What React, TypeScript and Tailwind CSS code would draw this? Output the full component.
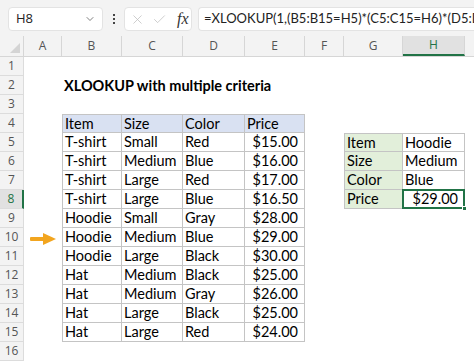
import { ChevronDown, X, Check } from 'lucide-react';

type Col = { key: string; w: string };

const cols: Col[] = [
    { key: 'A', w: 'w-[38px]' },
    { key: 'B', w: 'w-[60px]' },
    { key: 'C', w: 'w-[61px]' },
    { key: 'D', w: 'w-[62px]' },
    { key: 'E', w: 'w-[60px]' },
    { key: 'F', w: 'w-[39px]' },
    { key: 'G', w: 'w-[59px]' },
    { key: 'H', w: 'w-[62px]' },
    { key: 'I', w: 'w-[40px]' },
];

const products: string[][] = [
    ['T-shirt', 'Small', 'Red', '$15.00'],
    ['T-shirt', 'Medium', 'Blue', '$16.00'],
    ['T-shirt', 'Large', 'Red', '$17.00'],
    ['T-shirt', 'Large', 'Blue', '$16.50'],
    ['Hoodie', 'Small', 'Gray', '$28.00'],
    ['Hoodie', 'Medium', 'Blue', '$29.00'],
    ['Hoodie', 'Large', 'Black', '$30.00'],
    ['Hat', 'Medium', 'Black', '$25.00'],
    ['Hat', 'Medium', 'Gray', '$26.00'],
    ['Hat', 'Large', 'Black', '$25.00'],
    ['Hat', 'Large', 'Red', '$24.00'],
];

const lookup: string[][] = [
    ['Item', 'Hoodie'],
    ['Size', 'Medium'],
    ['Color', 'Blue'],
    ['Price', '$29.00'],
];

const border = 'border-[#c4c4c4]';

function Arrow() {
    return (
        <svg width="26" height="12" viewBox="0 0 26 12">
            <rect x="0" y="4" width="15" height="4" rx="1" fill="#f2a51f" />
            <path d="M13 0 L26 6 L13 12 Z" fill="#f2a51f" />
        </svg>
    );
}

function Cell({ row, col }: { row: number; col: string }) {
    const def = cols.find((c) => c.key === col)!;
    const colIdx = 'BCDE'.indexOf(col);
    const inTable = row >= 4 && row <= 15 && colIdx >= 0;
    const inLookup = row >= 5 && row <= 8 && (col === 'G' || col === 'H');

    let text = '';
    let right = false;
    let bold = false;
    let fill = '';
    let borders = '';

    if (row === 2 && col === 'B') {
        text = 'XLOOKUP with multiple criteria';
        bold = true;
    }
    if (inTable) {
        borders = `border-r border-b ${border}`;
        if (colIdx === 0) borders += ' border-l';
        if (row === 4) {
            borders += ' border-t';
            fill = 'bg-[#d9e1f2]';
            text = ['Item', 'Size', 'Color', 'Price'][colIdx];
        } else {
            text = products[row - 5][colIdx];
            right = colIdx === 3;
        }
    }
    if (inLookup) {
        borders = `border-r border-b ${border}`;
        if (col === 'G') {
            borders += ' border-l';
            fill = 'bg-[#e2efda]';
        }
        if (row === 5) borders += ' border-t';
        text = lookup[row - 5][col === 'G' ? 0 : 1];
        right = row === 8 && col === 'H';
    }

    return (
        <div
            className={`relative h-[19px] shrink-0 flex items-center ${def.w} ${fill} ${borders} ${
                right ? 'justify-end pr-[6px]' : 'pl-[2px]'
            }`}
        >
            {text && (
                <span className={`whitespace-nowrap text-[14.5px] text-black ${bold ? 'font-bold' : ''}`}>
                    {text}
                </span>
            )}
            {row === 10 && col === 'A' && (
                <div className="pl-[4px] pt-[2px]">
                    <Arrow />
                </div>
            )}
            {row === 8 && col === 'H' && (
                <div className="absolute -left-px -top-px -right-px -bottom-px border-2 border-[#217346]">
                    <div className="absolute -right-[4px] -bottom-[4px] w-[5px] h-[5px] bg-[#217346] border border-white" />
                </div>
            )}
        </div>
    );
}

export default function App() {
    const rows = Array.from({ length: 16 }, (_, i) => i + 1);

    return (
        <div className="w-[474px] h-[362px] overflow-hidden bg-white" style={{ fontFamily: 'Lato, sans-serif' }}>
            {/* formula bar */}
            <div className="h-[36px] bg-[#f3f3f3] flex items-start pt-[7px] pl-[8px] gap-[6px]">
                <div className="w-[95px] h-[24px] shrink-0 bg-white rounded-[4px] border border-[#e3e3e3] flex items-center justify-between pl-[7px] pr-[6px]">
                    <span className="text-[13px] text-[#222]" style={{ fontFamily: '"Open Sans", sans-serif' }}>H8</span>
                    <ChevronDown size={12} strokeWidth={1.5} className="text-[#555]" />
                </div>
                <div className="w-[9px] h-[24px] shrink-0 flex flex-col items-center justify-center gap-[2px]">
                    <div className="w-[2px] h-[2px] bg-[#444]" />
                    <div className="w-[2px] h-[2px] bg-[#444]" />
                    <div className="w-[2px] h-[2px] bg-[#444]" />
                </div>
                <div className="w-[68px] h-[24px] shrink-0 bg-white rounded-[4px] border border-[#e3e3e3] flex items-center pl-[5px] gap-[7px]">
                    <X size={15} strokeWidth={1.2} className="text-[#bdbdbd]" />
                    <Check size={15} strokeWidth={1.2} className="text-[#bdbdbd]" />
                    <span className="text-[16px] italic text-[#333] ml-[3px]" style={{ fontFamily: '"Liberation Serif", serif' }}>fx</span>
                </div>
                <div className="flex-1 min-w-0 h-[24px] bg-white rounded-l-[4px] border border-r-0 border-[#e3e3e3] flex items-center pl-[5px] overflow-hidden">
                    <span className="whitespace-nowrap text-[13px] text-[#222]">=XLOOKUP(1,(B5:B15=H5)*(C5:C15=H6)*(D5:D15=H7),E5:E15)</span>
                </div>
            </div>

            {/* column headers */}
            <div className="flex h-[21px] bg-[#f3f3f3] border-b border-[#d6d6d6]" style={{ fontFamily: '"Open Sans", sans-serif' }}>
                <div className="w-[24px] shrink-0 relative border-r border-[#d6d6d6]">
                    <svg width="10" height="10" viewBox="0 0 10 10" className="absolute right-[3px] bottom-[3px]">
                        <path d="M10 0 L10 10 L0 10 Z" fill="#d4d4d4" />
                    </svg>
                </div>
                {cols.map((c) => (
                    <div
                        key={c.key}
                        className={`${c.w} shrink-0 flex items-center justify-center text-[12px] border-r border-[#d6d6d6] ${
                            c.key === 'H'
                                ? 'bg-[#e1e1e1] text-[#217346] border-b-2 border-b-[#217346]'
                                : 'text-[#555]'
                        }`}
                    >
                        {c.key === 'I' ? '' : c.key}
                    </div>
                ))}
            </div>

            {/* sheet */}
            {rows.map((r) => (
                <div key={r} className="flex">
                    <div
                        className={`w-[24px] h-[19px] shrink-0 flex items-center justify-center text-[12px] border-r border-b border-[#dcdcdc] ${
                            r === 8 ? 'bg-[#e1e1e1] text-[#217346] border-r-2 border-r-[#217346]' : 'bg-[#f3f3f3] text-[#555]'
                        }`}
                        style={{ fontFamily: '"Open Sans", sans-serif' }}
                    >
                        {r}
                    </div>
                    {cols.map((c) => (
                        <Cell key={c.key} row={r} col={c.key} />
                    ))}
                </div>
            ))}
        </div>
    );
}
